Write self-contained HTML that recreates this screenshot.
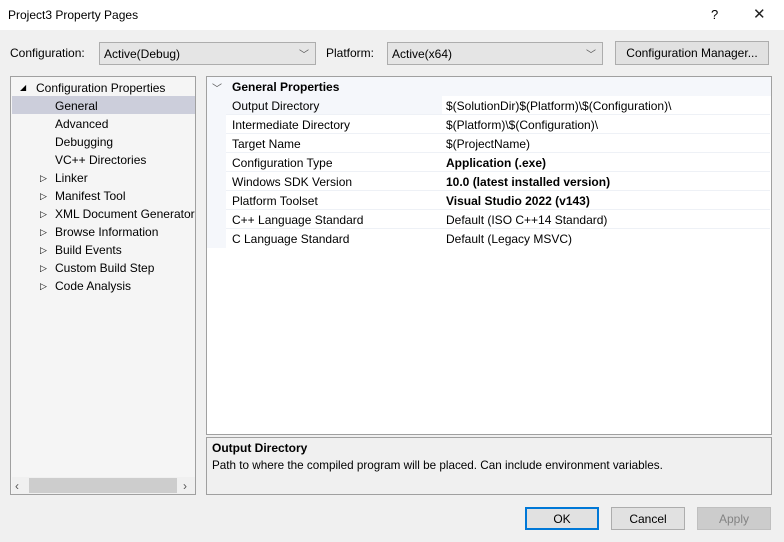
<!DOCTYPE html>
<html><head><style>
*{box-sizing:border-box;margin:0;padding:0}
body{width:784px;height:542px;background:#f0f0f0;font-family:"Liberation Sans",sans-serif;font-size:12px;color:#000;position:relative;overflow:hidden}
.a{position:absolute;white-space:nowrap}
.combo{position:absolute;background:#e5e5e5;border:1px solid #adadad;height:23px}
.combo span{position:absolute;left:4px;top:4px}
.combo i{position:absolute;right:6px;top:3px;font-style:normal;color:#555;font-size:10px}
.btn{position:absolute;background:#e1e1e1;border:1px solid #adadad;text-align:center;line-height:22px;height:23px}
.tree div{position:absolute;height:18px;line-height:20px}
.row{position:absolute;left:226px;width:544px;height:19px;border-bottom:1px solid #eef1f6}
.row .l{position:absolute;left:6px;top:3px}
.row .v{position:absolute;left:220px;top:3px}
</style></head><body>
<div class="a" style="left:0;top:0;width:784px;height:30px;background:#fff"></div>
<div class="a" style="left:8px;top:8px;font-size:12px">Project3 Property Pages</div>
<div class="a" style="left:711px;top:7px;font-size:13px">?</div>
<div class="a" style="left:753px;top:5px;font-size:15px;font-weight:300;color:#222">✕</div>

<div class="a" style="left:10px;top:46px">Configuration:</div>
<div class="combo" style="left:99px;top:42px;width:217px"><span>Active(Debug)</span><i>﹀</i></div>
<div class="a" style="left:326px;top:46px">Platform:</div>
<div class="combo" style="left:387px;top:42px;width:216px"><span>Active(x64)</span><i>﹀</i></div>
<div class="btn" style="left:615px;top:41px;width:154px;height:24px;line-height:22px">Configuration Manager...</div>

<div class="a tree" style="left:10px;top:76px;width:186px;height:419px;background:#f5f5f5;border:1px solid #a0a0a0">
<div style="left:1px;top:19px;width:183px;background:#cccedb"></div>
<div style="left:9px;top:1px;font-size:8px">◢</div>
<div style="left:25px;top:1px">Configuration Properties</div>
<div style="left:44px;top:19px">General</div>
<div style="left:44px;top:37px">Advanced</div>
<div style="left:44px;top:55px">Debugging</div>
<div style="left:44px;top:73px">VC++ Directories</div>
<div style="left:29px;top:91px;font-size:9px">▷</div><div style="left:44px;top:91px">Linker</div>
<div style="left:29px;top:109px;font-size:9px">▷</div><div style="left:44px;top:109px">Manifest Tool</div>
<div style="left:29px;top:127px;font-size:9px">▷</div><div style="left:44px;top:127px">XML Document Generator</div>
<div style="left:29px;top:145px;font-size:9px">▷</div><div style="left:44px;top:145px">Browse Information</div>
<div style="left:29px;top:163px;font-size:9px">▷</div><div style="left:44px;top:163px">Build Events</div>
<div style="left:29px;top:181px;font-size:9px">▷</div><div style="left:44px;top:181px">Custom Build Step</div>
<div style="left:29px;top:199px;font-size:9px">▷</div><div style="left:44px;top:199px">Code Analysis</div>
<div style="left:1px;top:400px;width:183px;height:17px;background:#f0f0f0"></div>
<div style="left:18px;top:401px;width:148px;height:15px;background:#cdcdcd"></div>
<div style="left:4px;top:399px;color:#555">‹</div>
<div style="left:172px;top:399px;color:#555">›</div>
</div>

<div class="a" style="left:206px;top:76px;width:566px;height:359px;background:#fff;border:1px solid #a0a0a0"></div>
<div class="a" style="left:207px;top:77px;width:564px;height:19px;background:#f5f7fb"></div>
<div class="a" style="left:207px;top:96px;width:19px;height:152px;background:#f5f7fb"></div>
<div class="a" style="left:226px;top:96px;width:216px;height:19px;background:#f5f7fb"></div>
<div class="a" style="left:212px;top:80px;color:#555;font-size:10px">﹀</div>
<div class="a" style="left:232px;top:80px;font-weight:bold">General Properties</div>
<div class="row" style="top:96px"><span class="l">Output Directory</span><span class="v">$(SolutionDir)$(Platform)\$(Configuration)\</span></div>
<div class="row" style="top:115px"><span class="l">Intermediate Directory</span><span class="v">$(Platform)\$(Configuration)\</span></div>
<div class="row" style="top:134px"><span class="l">Target Name</span><span class="v">$(ProjectName)</span></div>
<div class="row" style="top:153px"><span class="l">Configuration Type</span><span class="v"><b>Application (.exe)</b></span></div>
<div class="row" style="top:172px"><span class="l">Windows SDK Version</span><span class="v"><b>10.0 (latest installed version)</b></span></div>
<div class="row" style="top:191px"><span class="l">Platform Toolset</span><span class="v"><b>Visual Studio 2022 (v143)</b></span></div>
<div class="row" style="top:210px"><span class="l">C++ Language Standard</span><span class="v">Default (ISO C++14 Standard)</span></div>
<div class="row" style="top:229px;border-bottom:none"><span class="l">C Language Standard</span><span class="v">Default (Legacy MSVC)</span></div>

<div class="a" style="left:206px;top:437px;width:566px;height:58px;border:1px solid #a0a0a0;background:#f0f0f0"></div>
<div class="a" style="left:212px;top:441px;font-weight:bold">Output Directory</div>
<div class="a" style="left:212px;top:459px;font-size:11.7px">Path to where the compiled program will be placed. Can include environment variables.</div>

<div class="btn" style="left:525px;top:507px;width:74px;border:2px solid #0078d7;line-height:20px">OK</div>
<div class="btn" style="left:611px;top:507px;width:74px">Cancel</div>
<div class="btn" style="left:697px;top:507px;width:74px;background:#ccc;border-color:#bfbfbf;color:#838383">Apply</div>
</body></html>
